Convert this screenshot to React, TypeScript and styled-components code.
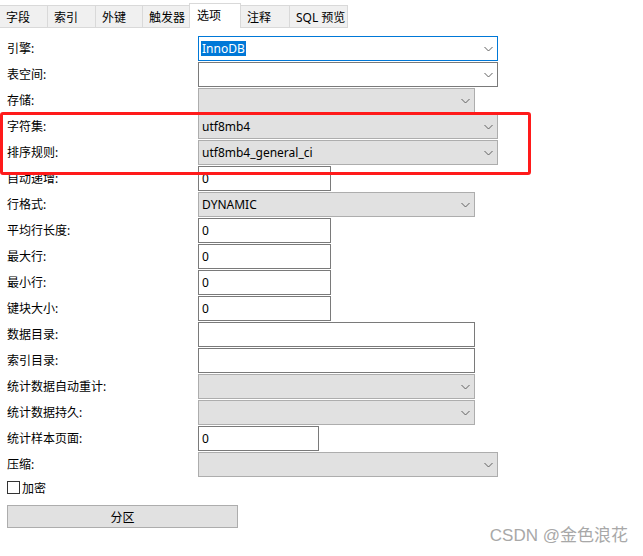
import React from 'react';
import styled, { createGlobalStyle } from 'styled-components';

const Global = createGlobalStyle`
  html, body {
    margin: 0;
    padding: 0;
    background: #fff;
  }
  body {
    font-family: "Noto Sans", "Noto Sans CJK SC", sans-serif;
    font-size: 12px;
    color: #000;
  }
`;

const Page = styled.div`
  position: relative;
  width: 643px;
  height: 556px;
  overflow: hidden;
  background: #fff;
`;

const TabBar = styled.div`
  display: flex;
  align-items: flex-end;
  height: 25px;
  margin-top: 3px;
`;

const Tab = styled.div<{ $active?: boolean; $w: number }>`
  box-sizing: border-box;
  width: ${(p) => p.$w}px;
  height: ${(p) => (p.$active ? 25 : 23)}px;
  margin-left: -1px;
  padding-left: ${(p) => (p.$active ? 7 : 6)}px;
  display: flex;
  align-items: center;
  border: 1px solid #d9d9d9;
  border-bottom: ${(p) => (p.$active ? 'none' : '1px solid #d9d9d9')};
  background: ${(p) => (p.$active ? '#fff' : '#f0f0f0')};
  padding-bottom: ${(p) => (p.$active ? 3 : 0)}px;
  &:first-child {
    margin-left: 0;
    border-left: none;
  }
`;

const Form = styled.div`
  display: flex;
  flex-direction: column;
  gap: 1px;
  padding: 8px 0 0 7px;
`;

const Row = styled.div`
  display: grid;
  grid-template-columns: 191px auto;
  align-items: center;
  height: 25px;
`;

const Label = styled.div`
  line-height: 25px;
  white-space: nowrap;
`;

const Box = styled.div<{ $w: number; $kind: 'focus' | 'edit' | 'grey' | 'input' }>`
  box-sizing: border-box;
  width: ${(p) => p.$w}px;
  height: 25px;
  display: flex;
  align-items: center;
  justify-content: space-between;
  padding: 0 4px 0 2px;
  background: ${(p) => (p.$kind === 'grey' ? '#e1e1e1' : '#fff')};
  border: 1px solid
    ${(p) =>
      p.$kind === 'focus' ? '#0078d7' : p.$kind === 'grey' ? '#adadad' : '#7a7a7a'};
  white-space: nowrap;
`;

const Value = styled.span<{ $selected?: boolean }>`
  padding: 0 1px;
  line-height: 15px;
  background: ${(p) => (p.$selected ? '#0078d7' : 'transparent')};
  color: ${(p) => (p.$selected ? '#fff' : '#000')};
`;

const Chevron = () => (
  <svg width="9" height="6" viewBox="0 0 9 6" fill="none">
    <path d="M0.5 1 L4.5 5 L8.5 1" stroke="#606060" strokeWidth="1" />
  </svg>
);

const CheckRow = styled.label`
  display: flex;
  align-items: center;
  gap: 2px;
  height: 17px;
  margin: 2px 0 0 7px;
`;

const CheckBox = styled.span`
  box-sizing: border-box;
  width: 13px;
  height: 13px;
  border: 1px solid #333;
  background: #fff;
`;

const Button = styled.div`
  box-sizing: border-box;
  width: 231px;
  height: 23px;
  margin: 9px 0 0 7px;
  display: flex;
  align-items: center;
  justify-content: center;
  background: #e1e1e1;
  border: 1px solid #adadad;
`;

const Highlight = styled.div`
  position: absolute;
  left: 0;
  top: 112px;
  width: 531px;
  height: 63px;
  box-sizing: border-box;
  border: 3px solid #ff1a1a;
  border-radius: 3px;
  pointer-events: none;
`;

const Watermark = styled.div`
  position: absolute;
  right: 15px;
  top: 524px;
  font-family: "Liberation Sans", "Noto Sans CJK SC", sans-serif;
  font-size: 17px;
  line-height: 24px;
  color: #a8a8a8;
  white-space: nowrap;
`;

type Field = {
  label: string;
  kind: 'focus' | 'edit' | 'grey' | 'input';
  w: number;
  value?: string;
};

const fields: Field[] = [
  { label: '引擎:', kind: 'focus', w: 300, value: 'InnoDB' },
  { label: '表空间:', kind: 'edit', w: 300 },
  { label: '存储:', kind: 'grey', w: 277 },
  { label: '字符集:', kind: 'grey', w: 300, value: 'utf8mb4' },
  { label: '排序规则:', kind: 'grey', w: 300, value: 'utf8mb4_general_ci' },
  { label: '自动递增:', kind: 'input', w: 133, value: '0' },
  { label: '行格式:', kind: 'grey', w: 277, value: 'DYNAMIC' },
  { label: '平均行长度:', kind: 'input', w: 133, value: '0' },
  { label: '最大行:', kind: 'input', w: 133, value: '0' },
  { label: '最小行:', kind: 'input', w: 133, value: '0' },
  { label: '键块大小:', kind: 'input', w: 133, value: '0' },
  { label: '数据目录:', kind: 'input', w: 277 },
  { label: '索引目录:', kind: 'input', w: 277 },
  { label: '统计数据自动重计:', kind: 'grey', w: 277 },
  { label: '统计数据持久:', kind: 'grey', w: 277 },
  { label: '统计样本页面:', kind: 'input', w: 121, value: '0' },
  { label: '压缩:', kind: 'grey', w: 300 },
];

const tabs = [
  { name: '字段', w: 48 },
  { name: '索引', w: 49 },
  { name: '外键', w: 48 },
  { name: '触发器', w: 48 },
  { name: '选项', w: 52, active: true },
  { name: '注释', w: 50 },
  { name: 'SQL 预览', w: 59 },
];

export default function App() {
  return (
    <Page>
      <Global />
      <TabBar>
        {tabs.map((t) => (
          <Tab key={t.name} $w={t.w} $active={t.active}>
            {t.name}
          </Tab>
        ))}
      </TabBar>
      <Form>
        {fields.map((f) => (
          <Row key={f.label}>
            <Label>{f.label}</Label>
            <Box $w={f.w} $kind={f.kind}>
              <Value $selected={f.kind === 'focus'}>{f.value}</Value>
              {f.kind !== 'input' && <Chevron />}
            </Box>
          </Row>
        ))}
      </Form>
      <CheckRow>
        <CheckBox />
        加密
      </CheckRow>
      <Button>分区</Button>
      <Highlight />
      <Watermark>CSDN @金色浪花</Watermark>
    </Page>
  );
}
